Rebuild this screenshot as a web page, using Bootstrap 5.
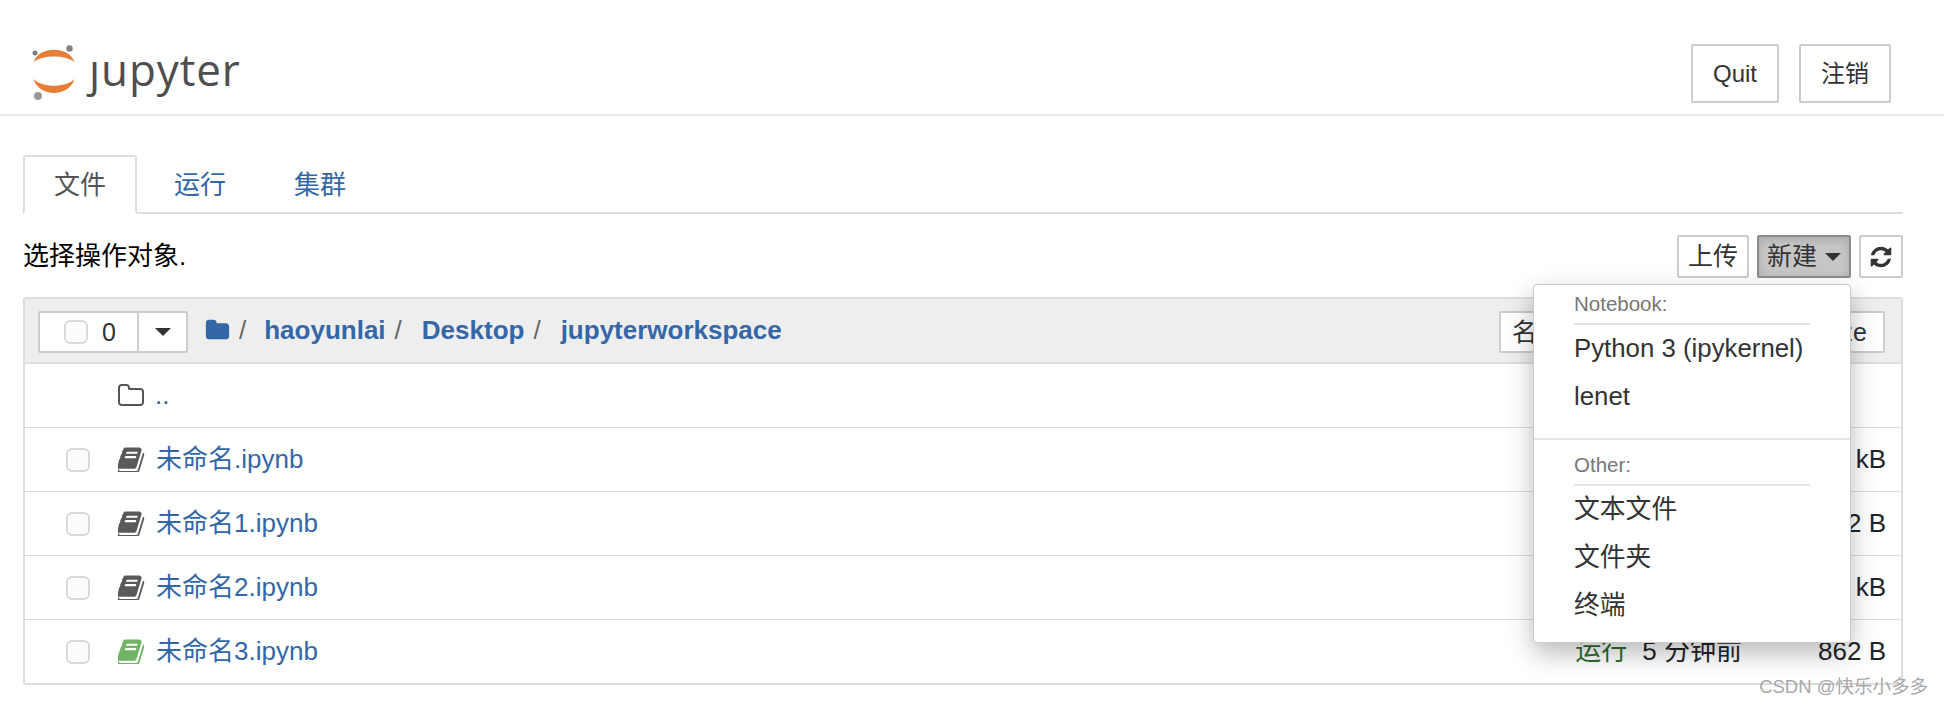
<!DOCTYPE html>
<html lang="zh-CN">
<head>
    <meta charset="UTF-8">
    <title>Jupyter Notebook</title>
    <link href="https://cdn.jsdelivr.net/npm/bootstrap@5.3.0/dist/css/bootstrap.min.css" rel="stylesheet">
    <style>
        html, body { height: 704px; overflow: hidden; }
        body {
            position: relative;
            background: #fff;
            color: #000;
            font-family: "Liberation Sans", "Noto Sans CJK SC", sans-serif;
            font-size: 26px;
        }
        a { color: #3467a8; text-decoration: none; }
        .top-bar {
            height: 116px;
            padding: 44px 53px 0 32px;
            border-bottom: 2px solid #e7e7e7;
        }
        .logo-word {
            margin-left: 13px;
            margin-top: -5px;
            font-family: "Open Sans", sans-serif;
            font-size: 44px;
            line-height: 60px;
            letter-spacing: .9px;
            color: #4e4e4e;
        }
        .top-btn {
            height: 59px;
            padding: 0 20px;
            margin-left: 20px;
            font-size: 24px;
            color: #333;
            background: #fff;
            border: 2px solid #ccc;
            border-radius: 2px;
        }
        .page-body { padding: 39px 41px 0 23px; }
        .nav-tabs { border-bottom: 2px solid #ddd; height: 59px; }
        .nav-tabs .nav-link {
            height: 59px;
            padding: 0 29px;
            margin: 0 6px 0 0;
            font-size: 26px;
            line-height: 57px;
            color: #3467a8;
            border: 2px solid transparent;
            border-radius: 3px 3px 0 0;
        }
        .nav-tabs .nav-link.active {
            color: #555;
            border-color: #ddd #ddd #fff;
        }
        .tool-row { height: 83px; padding-top: 21px; }
        .tool-text { line-height: 42px; }
        .tool-btn {
            height: 43px;
            width: 72px;
            padding: 0;
            font-size: 25px;
            line-height: 1;
            white-space: nowrap;
            color: #333;
            background: #fff;
            border: 2px solid #ccc;
            border-radius: 2px;
        }
        .tool-btn-open {
            width: 94px;
            background: #c6c6c6;
            border-color: #8c8c8c;
            box-shadow: inset 0 3px 8px rgba(0, 0, 0, .15);
        }
        .tool-refresh { width: 44px; padding: 0; margin-right: 0; }
        .menu-anchor { position: relative; }
        .caret-down {
            display: inline-block;
            width: 0;
            height: 0;
            border-top: 8px solid #333;
            border-left: 8px solid transparent;
            border-right: 8px solid transparent;
        }
        .new-menu {
            position: absolute;
            top: 49px;
            right: 0;
            left: auto;
            width: 318px;
            padding: 0 0 12px;
            font-size: 26px;
            border: 1px solid #ccc;
            border-radius: 4px;
            box-shadow: 0 10px 26px rgba(0, 0, 0, .28);
            z-index: 5;
        }
        .new-menu .menu-label {
            margin: 0 40px;
            padding: 0;
            height: 40px;
            font-size: 20.5px;
            line-height: 38px;
            color: #777;
            border-bottom: 2px solid #e5e5e5;
            white-space: nowrap;
        }
        .new-menu .menu-label-other { height: 46px; line-height: 50px; }
        .new-menu .dropdown-item {
            padding: 0 40px;
            height: 48px;
            line-height: 46px;
            font-size: 25.8px;
            color: #333;
        }
        .new-menu .dropdown-divider {
            margin: 17px 0 0;
            border-top: 2px solid #e5e5e5;
            opacity: 1;
        }
        .file-panel {
            height: 388px;
            border: 2px solid #ddd;
            border-radius: 3px;
        }
        .panel-head {
            height: 65px;
            padding: 12px 16px 0 13px;
            background: #eee;
            border-bottom: 2px solid #ddd;
            border-radius: 0;
        }
        .select-box {
            width: 150px;
            height: 42px;
            background: #fff;
            border: 2px solid #ccc;
            border-radius: 2px;
        }
        .select-count { width: 97px; padding-left: 24px; gap: 14px; color: #333; line-height: 38px; font-size: 25px; }
        .select-caret { flex: 1; border-left: 2px solid #ccc; }
        .form-check-input.file-check {
            width: 24px;
            height: 24px;
            margin: 0;
            flex: none;
            border: 2px solid #dadada;
            border-radius: 6px;
            background-color: #fcfcfc;
        }
        .crumbs { height: 38px; margin-left: 17px; font-size: 26px; font-weight: 700; line-height: 38px; color: #666; }
        .crumbs svg { margin-right: 9px; }
        .crumbs span { font-weight: 400; margin-right: 18px; }
        .crumbs a { margin-right: 9px; }
        .crumbs a + span { margin-right: 20px; }
        .sort-box {
            width: 386px;
            height: 42px;
            padding: 0 16px 0 11px;
            background: #fff;
            border: 2px solid #ccc;
            border-radius: 2px;
            color: #333;
            font-size: 25px;
            line-height: 38px;
            white-space: nowrap;
        }
        .file-row {
            height: 64px;
            padding: 0 15px 0 41px;
            border: 0;
            border-bottom: 2px solid #ddd;
            font-size: 26px;
        }
        .file-row:last-child { height: 63px; border-bottom: 0; }
        .check-gap { width: 24px; flex: none; }
        .file-icon { margin: 0 11px 0 28px; flex: none; color: #5a5a5a; }
        .file-icon-folder { margin: 0 10px 0 27px; }
        .file-icon-run { color: #6fb563; }
        .file-name { white-space: nowrap; }
        .run-label { color: #2f6b2f; margin-right: 15px; }
        .file-time { margin-right: 76px; }
        .water-mark {
            position: absolute;
            right: 16px;
            top: 675px;
            font-size: 18.5px;
            line-height: 24px;
            color: #a8a8a8;
            z-index: 6;
            white-space: nowrap;
        }
    </style>
</head>
<body>
    <svg width="0" height="0" class="d-none">
        <symbol id="ico-book" viewBox="100 100 1600 1500"><path fill="currentColor" d="M1639 478q40 57 18 129l-275 906q-19 64-76.5 107.5t-122.5 43.5h-923q-77 0-148.5-53.5t-99.5-131.5q-24-67-2-127 0-4 3-27t4-37q1-8-3-21.5t-3-19.5q2-11 8-21t16.5-23.5 16.5-23.5q23-38 45-91.5t30-91.5q3-10 .5-30t-.5-28q3-11 17-28t17-23q21-36 42-92t25-90q1-9-2.5-32t.5-28q4-13 22-30.5t22-22.5q19-26 42.5-84.5t27.5-96.5q1-8-3-25.5t-2-26.5q2-8 9-18t18-23 17-21q8-12 16.5-30.5t15-35 16-36 19.5-32 26.5-23.5 36-11.5 47.5 5.5l-1 3q38-9 51-9h761q74 0 114 56t18 130l-274 906q-36 119-71.5 153.5t-128.5 34.5h-869q-27 0-38 15-11 16-1 43 24 70 144 70h923q29 0 56-15.5t35-41.5l300-987q7-22 5-57 38 15 59 43zm-1064 2q-4 13 2 22.5t20 9.5h608q13 0 25.5-9.5t16.5-22.5l21-64q4-13-2-22.5t-20-9.5h-608q-13 0-25.5 9.5t-16.5 22.5zm-83 256q-4 13 2 22.5t20 9.5h608q13 0 25.5-9.5t16.5-22.5l21-64q4-13-2-22.5t-20-9.5h-608q-13 0-25.5 9.5t-16.5 22.5z"/></symbol>
    </svg>

    <header class="top-bar d-flex">
        <svg width="44" height="56" viewBox="32 45 44 56">
            <path fill="#e67e36" d="M33.5 63C39 46.500 69 46.500 74.500 63C66 55.500 42 55.500 33.500 63Z"/>
            <path fill="#e67e36" d="M33.500 80C42 89 66 89 74.500 80C69 98.500 39 98.500 33.500 80Z"/>
            <circle cx="35" cy="54" r="2.500" fill="#7f7f7f"/>
            <circle cx="69.500" cy="49.500" r="3.200" fill="#7f7f7f"/>
            <circle cx="38" cy="97" r="4" fill="#9a9a9a"/>
        </svg>
        <div class="logo-word">ȷupyter</div>
        <div class="ms-auto d-flex align-items-start">
            <button class="btn top-btn" type="button">Quit</button>
            <button class="btn top-btn" type="button">注销</button>
        </div>
    </header>

    <main class="page-body">
        <ul class="nav nav-tabs">
            <li class="nav-item"><a class="nav-link active" href="#">文件</a></li>
            <li class="nav-item"><a class="nav-link" href="#">运行</a></li>
            <li class="nav-item"><a class="nav-link" href="#">集群</a></li>
        </ul>

        <div class="tool-row d-flex justify-content-between">
            <div class="tool-text">选择操作对象.</div>
            <div class="d-flex gap-2">
                <button class="btn tool-btn" type="button">上传</button>
                <div class="menu-anchor">
                    <button class="btn tool-btn tool-btn-open d-flex align-items-center justify-content-center gap-2" type="button">新建<i class="caret-down"></i></button>
                    <div class="dropdown-menu show new-menu">
                        <div class="menu-label">Notebook:</div>
                        <a class="dropdown-item" href="#">Python 3 (ipykernel)</a>
                        <a class="dropdown-item" href="#">lenet</a>
                        <div class="dropdown-divider"></div>
                        <div class="menu-label menu-label-other">Other:</div>
                        <a class="dropdown-item" href="#">文本文件</a>
                        <a class="dropdown-item" href="#">文件夹</a>
                        <a class="dropdown-item" href="#">终端</a>
                    </div>
                </div>
                <button class="btn tool-btn tool-refresh d-flex align-items-center justify-content-center" type="button" aria-label="刷新">
                    <svg width="24" height="24" viewBox="0 0 1792 1792"><path fill="#333" d="M1639 1056q0 5-1 7-64 268-268 434.5t-478 166.5q-146 0-282.5-55t-243.5-157l-129 129q-19 19-45 19t-45-19-19-45v-448q0-26 19-45t45-19h448q26 0 45 19t19 45-19 45l-137 137q71 66 161 102t187 36q134 0 250-65t186-179q11-17 53-117 8-23 30-23h192q13 0 22.5 9.5t9.5 22.5zm25-800v448q0 26-19 45t-45 19h-448q-26 0-45-19t-19-45 19-45l138-138q-148-137-349-137-134 0-250 65t-186 179q-11 17-53 117-8 23-30 23h-199q-13 0-22.5-9.5t-9.5-22.5v-7q65-268 270-434.5t480-166.5q146 0 284 55.5t245 156.5l130-129q19-19 45-19t45 19 19 45z"/></svg>
                </button>
            </div>
        </div>

        <div class="file-panel">
            <div class="panel-head d-flex">
                <div class="select-box d-flex">
                    <div class="select-count d-flex align-items-center">
                        <input class="form-check-input file-check" type="checkbox" aria-label="全选">
                        <span>0</span>
                    </div>
                    <div class="select-caret d-flex align-items-center justify-content-center"><i class="caret-down"></i></div>
                </div>
                <div class="crumbs d-flex align-items-center">
                    <svg width="25" height="25" viewBox="0 0 1664 1792"><path fill="#3467a8" d="M1664 600v704q0 92-66 158t-158 66h-1216q-92 0-158-66t-66-158v-960q0-92 66-158t158-66h320q92 0 158 66t66 158v32h672q92 0 158 66t66 158z"/></svg>
                    <span>/</span>
                    <a href="#">haoyunlai</a><span>/</span>
                    <a href="#">Desktop</a><span>/</span>
                    <a href="#">jupyterworkspace</a>
                </div>
                <div class="sort-box ms-auto d-flex justify-content-between overflow-hidden">
                    <span>名字</span>
                    <span>Size</span>
                </div>
            </div>
            <div class="list-group list-group-flush">
                <div class="list-group-item file-row d-flex align-items-center">
                    <span class="check-gap"></span>
                    <svg class="file-icon file-icon-folder" width="28" height="28" viewBox="0 0 1792 1792"><path fill="#555" d="M1600 1312v-704q0-40-28-68t-68-28h-704q-40 0-68-28t-28-68v-64q0-40-28-68t-68-28h-320q-40 0-68 28t-28 68v960q0 40 28 68t68 28h1216q40 0 68-28t28-68zm128-704v704q0 92-66 158t-158 66h-1216q-92 0-158-66t-66-158v-960q0-92 66-158t158-66h320q92 0 158 66t66 158v32h672q92 0 158 66t66 158z"/></svg>
                    <a class="file-name" href="#">..</a>
                </div>
                <div class="list-group-item file-row d-flex align-items-center">
                    <input class="form-check-input file-check" type="checkbox" aria-label="选择">
                    <svg class="file-icon" width="27" height="25"><use href="#ico-book"/></svg>
                    <a class="file-name" href="#">未命名.ipynb</a>
                    <span class="ms-auto">1.5 kB</span>
                </div>
                <div class="list-group-item file-row d-flex align-items-center">
                    <input class="form-check-input file-check" type="checkbox" aria-label="选择">
                    <svg class="file-icon" width="27" height="25"><use href="#ico-book"/></svg>
                    <a class="file-name" href="#">未命名1.ipynb</a>
                    <span class="ms-auto">862 B</span>
                </div>
                <div class="list-group-item file-row d-flex align-items-center">
                    <input class="form-check-input file-check" type="checkbox" aria-label="选择">
                    <svg class="file-icon" width="27" height="25"><use href="#ico-book"/></svg>
                    <a class="file-name" href="#">未命名2.ipynb</a>
                    <span class="ms-auto">1.5 kB</span>
                </div>
                <div class="list-group-item file-row d-flex align-items-center">
                    <input class="form-check-input file-check" type="checkbox" aria-label="选择">
                    <svg class="file-icon file-icon-run" width="27" height="25"><use href="#ico-book"/></svg>
                    <a class="file-name" href="#">未命名3.ipynb</a>
                    <span class="ms-auto run-label">运行</span>
                    <span class="file-time">5 分钟前</span>
                    <span>862 B</span>
                </div>
            </div>
        </div>
    </main>

    <div class="water-mark">CSDN @快乐小多多</div>

    <script src="https://cdn.jsdelivr.net/npm/bootstrap@5.3.0/dist/js/bootstrap.bundle.min.js"></script>
</body>
</html>
